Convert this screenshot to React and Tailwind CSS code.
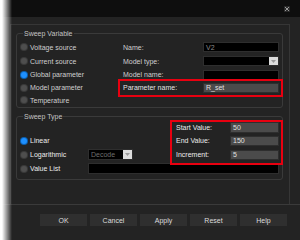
import React from 'react'

const Radio = ({ on }) => (
  <span
    className={
      on
        ? 'w-[6px] h-[6px] rounded-full bg-[#1e90ff] shadow-[0_0_0_1px_#0b5fb0] shrink-0'
        : 'w-[6px] h-[6px] rounded-full bg-[#4e4e4e] shadow-[0_0_0_1px_#3a3a3a] shrink-0'
    }
  />
)

const RadioRow = ({ on, label, bright }) => (
  <div className="flex items-center gap-[3px]">
    <Radio on={on} />
    <span className={bright ? 'text-[#ececec]' : 'text-[#cfcfcf]'}>{label}</span>
  </div>
)

const Box = ({ value, gray, className = '' }) => (
  <div
    className={
      (gray ? 'bg-[#4b4b4b] text-[#e0e0e0] ' : 'bg-black text-[#8a8a8a] ') +
      'h-[10px] border border-[#2e2e2e] flex items-center px-[2px] leading-none ' +
      className
    }
  >
    {value}
  </div>
)

const Drop = ({ value, className = '' }) => (
  <div className={'bg-black h-[10px] border border-[#2e2e2e] flex items-center justify-between ' + className}>
    <span className="pl-[2px] text-[#6e6e6e] leading-none">{value}</span>
    <span className="w-[9px] h-full bg-[#dcdcdc] flex items-center justify-center">
      <svg width="5" height="3" viewBox="0 0 5 3">
        <path d="M0 0 L5 0 L2.5 3 Z" fill="#9a9a9a" />
      </svg>
    </span>
  </div>
)

const App = () => {
  return (
    <div
      className="relative w-[300px] h-[240px] bg-[#232323] overflow-hidden text-[7px] leading-[9px]"
      style={{ fontFamily: '"Liberation Sans", Arial, sans-serif' }}
    >
      <div className="h-[17px] bg-[#0e0e0e] flex items-center justify-end pr-[10px]">
        <svg width="6" height="6" viewBox="0 0 6 6">
          <rect x="0" y="0" width="6" height="6" fill="#2a2a2a" />
          <path d="M1 1 L5 5 M5 1 L1 5" stroke="#9a9a9a" strokeWidth="1" />
        </svg>
      </div>

      <div className="ml-[10px] mt-[7px] w-[280px] h-[180px] border-t border-x border-[#363636] pl-[5px] pr-[6px] pt-[4px]">
        <fieldset className="border border-[#3a3a3a] rounded-[3px] pl-[4px] pr-[3px] pb-[1px]">
          <legend className="ml-[2px] px-[1px] text-[#c4c4c4]">Sweep Variable</legend>
          <div className="grid grid-cols-[102px_1fr] grid-rows-[14px_14px_13px_13px_12px] mt-[2px]">
            <div className="flex items-center"><RadioRow label="Voltage source" /></div>
            <div className="flex items-center">
              <span className="w-[80px] text-[#cfcfcf]">Name:</span>
              <Box value="V2" className="w-[76px]" />
            </div>
            <div className="flex items-center"><RadioRow label="Current source" /></div>
            <div className="flex items-center">
              <span className="w-[80px] text-[#cfcfcf]">Model type:</span>
              <Drop value="" className="w-[76px]" />
            </div>
            <div className="flex items-center"><RadioRow on label="Global parameter" /></div>
            <div className="flex items-center">
              <span className="w-[80px] text-[#cfcfcf]">Model name:</span>
              <Box value="" className="w-[76px]" />
            </div>
            <div className="flex items-center"><RadioRow label="Model parameter" /></div>
            <div className="flex items-center">
              <span className="w-[80px] text-[#e2e2e2]">Parameter name:</span>
              <Box value="R_set" gray className="w-[76px]" />
            </div>
            <div className="flex items-center"><RadioRow label="Temperature" /></div>
            <div />
          </div>
        </fieldset>

        <fieldset className="mt-[4px] border border-[#3a3a3a] rounded-[3px] pl-[4px] pr-[3px] pb-[4px]">
          <legend className="ml-[2px] px-[1px] text-[#c4c4c4]">Sweep Type</legend>
          <div className="grid grid-cols-[67px_82px_1fr] grid-rows-[13px_13.5px_14.5px_13px]">
            <div />
            <div />
            <div className="flex items-center pl-[6px]">
              <span className="w-[54px] text-[#ececec]">Start Value:</span>
              <Box value="50" gray className="w-[49px] h-[11px]" />
            </div>
            <div className="flex items-center"><RadioRow on bright label="Linear" /></div>
            <div />
            <div className="flex items-center pl-[6px]">
              <span className="w-[54px] text-[#ececec]">End Value:</span>
              <Box value="150" gray className="w-[49px]" />
            </div>
            <div className="flex items-center"><RadioRow bright label="Logarithmic" /></div>
            <div className="flex items-center">
              <Drop value="Decode" className="w-[45px] h-[11px]" />
            </div>
            <div className="flex items-center pl-[6px]">
              <span className="w-[54px] text-[#ececec]">Increment:</span>
              <Box value="5" gray className="w-[49px]" />
            </div>
            <div className="flex items-center"><RadioRow bright label="Value List" /></div>
            <div className="col-span-2 flex items-center">
              <Box value="" className="w-[191px] h-[11px]" />
            </div>
          </div>
        </fieldset>
      </div>

      <div className="border-t border-[#3a3a3a] flex justify-end gap-[3px] pr-[13px] pt-[9px]">
        {['OK', 'Cancel', 'Apply', 'Reset', 'Help'].map((b) => (
          <button
            key={b}
            className="w-[47px] h-[12px] bg-[#2f2f2f] text-[#dcdcdc] flex items-center justify-center leading-none"
          >
            {b}
          </button>
        ))}
      </div>

      <div className="absolute left-[118px] top-[79px] w-[165px] h-[18px] border-2 border-[#e80010]" />
      <div className="absolute left-[170px] top-[120px] w-[113px] h-[45px] border-2 border-[#e80010]" />
      <div className="absolute left-0 top-0 h-full w-[13px] bg-[linear-gradient(to_right,#ffffff_0px,#ffffff_2px,rgba(255,255,255,0)_12px)]" />
    </div>
  )
}

export default App
